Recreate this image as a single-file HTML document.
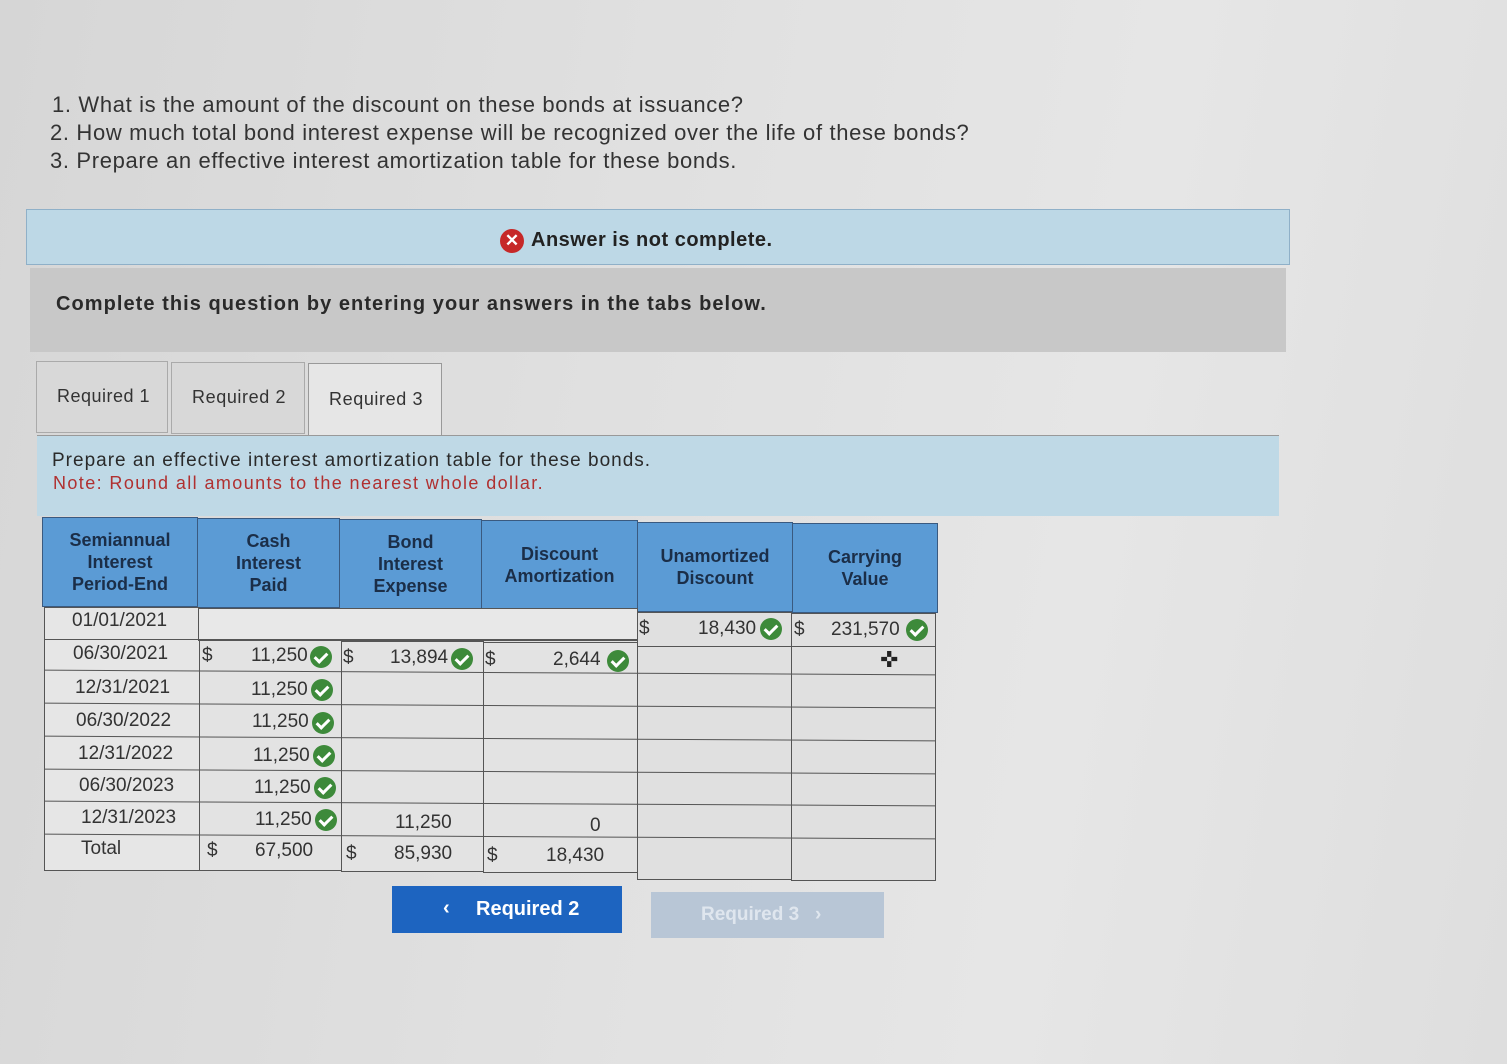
<!DOCTYPE html><html><head><style>
body{margin:0;width:1507px;height:1064px;overflow:hidden;background:linear-gradient(100deg,#d6d6d6 0%,#e0e0e0 40%,#e6e6e6 70%,#dedede 100%);font-family:"Liberation Sans",sans-serif;position:relative}
.a{position:absolute}
.q{font-size:22px;color:#333;letter-spacing:0.65px}
.c{position:absolute;box-sizing:border-box;border:1px solid #555;background:#e3e3e3;font-size:19px;color:#333}
.h{background:#5b9bd5;color:#1b2e48;font-weight:bold;font-size:18px;text-align:center;display:flex;align-items:center;justify-content:center;line-height:22px;border-color:#3a5a80}
.ck{position:absolute;width:22px;height:22px;border-radius:50%;background:#3d8a3a}
.ck:after{content:"";position:absolute;left:7px;top:4px;width:5px;height:10px;border:solid #fff;border-width:0 3px 3px 0;transform:rotate(45deg)}
.t{position:absolute;font-size:19px;color:#333}
</style></head><body>
<div class="a q" style="left:52px;top:92px">1. What is the amount of the discount on these bonds at issuance?</div>
<div class="a q" style="left:50px;top:120px">2. How much total bond interest expense will be recognized over the life of these bonds?</div>
<div class="a q" style="left:50px;top:148px">3. Prepare an effective interest amortization table for these bonds.</div>
<div class="a" style="left:26px;top:209px;width:1264px;height:56px;background:#bdd8e6;border:1px solid #8fb0c8;box-sizing:border-box"></div>
<div class="a" style="left:500px;top:229px;width:24px;height:24px;border-radius:50%;background:#c62828;color:#fff;font-size:17px;text-align:center;line-height:23px;font-weight:bold">✕</div>
<div class="a" style="left:531px;top:229px;font-size:20px;font-weight:bold;color:#222;letter-spacing:0.5px">Answer is not complete.</div>
<div class="a" style="left:30px;top:268px;width:1256px;height:84px;background:#c8c8c8"></div>
<div class="a" style="left:56px;top:293px;font-size:20px;font-weight:bold;color:#2a2a2a;letter-spacing:1.05px">Complete this question by entering your answers in the tabs below.</div>
<div class="a" style="left:36px;top:361px;width:132px;height:72px;background:#d8d8d8;border:1px solid #aaa;box-sizing:border-box"></div>
<div class="a" style="left:171px;top:362px;width:134px;height:72px;background:#d8d8d8;border:1px solid #aaa;box-sizing:border-box"></div>
<div class="a" style="left:308px;top:363px;width:134px;height:74px;background:#e6e6e6;border:1px solid #999;border-bottom:none;box-sizing:border-box"></div>
<div class="a" style="left:57px;top:386px;font-size:18px;color:#333;letter-spacing:0.5px">Required 1</div>
<div class="a" style="left:192px;top:387px;font-size:18px;color:#333;letter-spacing:0.6px">Required 2</div>
<div class="a" style="left:329px;top:389px;font-size:18px;color:#333;letter-spacing:0.6px">Required 3</div>
<div class="a" style="left:37px;top:435px;width:1242px;height:80px;background:#bfd9e6;border-top:1px solid #999"></div>
<div class="a" style="left:52px;top:450px;font-size:19px;color:#2a2a2a;letter-spacing:1px">Prepare an effective interest amortization table for these bonds.</div>
<div class="a" style="left:53px;top:473px;font-size:18px;color:#b03030;letter-spacing:1.4px">Note: Round all amounts to the nearest whole dollar.</div>

<div class="c h" style="left:42px;top:517px;width:156px;height:90px">Semiannual<br>Interest<br>Period-End</div>
<div class="c h" style="left:197px;top:518px;width:143px;height:90px">Cash<br>Interest<br>Paid</div>
<div class="c h" style="left:339px;top:519px;width:143px;height:90px">Bond<br>Interest<br>Expense</div>
<div class="c h" style="left:481px;top:520px;width:157px;height:90px">Discount<br>Amortization</div>
<div class="c h" style="left:637px;top:522px;width:156px;height:90px">Unamortized<br>Discount</div>
<div class="c h" style="left:792px;top:523px;width:146px;height:90px">Carrying<br>Value</div>

<div class="c" style="left:44px;top:607px;width:156px;height:264px;background:#e6e6e6"></div>
<div class="c" style="left:198px;top:608px;width:440px;height:33px;background:#e8e8e8"></div>
<div class="c" style="left:199px;top:640px;width:143px;height:231px"></div>
<div class="c" style="left:341px;top:641px;width:143px;height:231px"></div>
<div class="c" style="left:483px;top:642px;width:155px;height:231px"></div>
<div class="c" style="left:637px;top:612px;width:155px;height:268px;background:#e0e0e0"></div>
<div class="c" style="left:791px;top:613px;width:145px;height:268px;background:#e0e0e0"></div>
<div class="a" style="left:44px;top:639px;width:594px;border-top:1px solid #555"></div>
<div class="a" style="left:44px;top:672px;width:892px;border-top:1px solid #555;transform:rotate(0.3deg)"></div>
<div class="a" style="left:44px;top:705px;width:892px;border-top:1px solid #555;transform:rotate(0.3deg)"></div>
<div class="a" style="left:44px;top:738px;width:892px;border-top:1px solid #555;transform:rotate(0.3deg)"></div>
<div class="a" style="left:44px;top:771px;width:892px;border-top:1px solid #555;transform:rotate(0.3deg)"></div>
<div class="a" style="left:44px;top:803px;width:892px;border-top:1px solid #555;transform:rotate(0.3deg)"></div>
<div class="a" style="left:44px;top:836px;width:892px;border-top:1px solid #555;transform:rotate(0.3deg)"></div>
<div class="a" style="left:637px;top:646px;width:299px;border-top:1px solid #555"></div>
<div class="a" style="left:791px;top:613px;height:232px;border-left:1px solid #555"></div>

<div class="t" style="left:72px;top:610px">01/01/2021</div>
<div class="t" style="left:73px;top:643px">06/30/2021</div>
<div class="t" style="left:75px;top:677px">12/31/2021</div>
<div class="t" style="left:76px;top:710px">06/30/2022</div>
<div class="t" style="left:78px;top:743px">12/31/2022</div>
<div class="t" style="left:79px;top:775px">06/30/2023</div>
<div class="t" style="left:81px;top:807px">12/31/2023</div>
<div class="t" style="left:81px;top:838px">Total</div>

<div class="t" style="left:202px;top:645px">$</div><div class="t" style="left:251px;top:645px">11,250</div><div class="ck" style="left:310px;top:646px"></div>
<div class="t" style="left:251px;top:679px">11,250</div><div class="ck" style="left:311px;top:679px"></div>
<div class="t" style="left:252px;top:711px">11,250</div><div class="ck" style="left:312px;top:712px"></div>
<div class="t" style="left:253px;top:745px">11,250</div><div class="ck" style="left:313px;top:745px"></div>
<div class="t" style="left:254px;top:777px">11,250</div><div class="ck" style="left:314px;top:777px"></div>
<div class="t" style="left:255px;top:809px">11,250</div><div class="ck" style="left:315px;top:809px"></div>
<div class="t" style="left:207px;top:840px">$</div><div class="t" style="left:255px;top:840px">67,500</div>

<div class="t" style="left:343px;top:647px">$</div><div class="t" style="left:390px;top:647px">13,894</div><div class="ck" style="left:451px;top:648px"></div>
<div class="t" style="left:395px;top:812px">11,250</div>
<div class="t" style="left:346px;top:843px">$</div><div class="t" style="left:394px;top:843px">85,930</div>

<div class="t" style="left:485px;top:649px">$</div><div class="t" style="left:553px;top:649px">2,644</div><div class="ck" style="left:607px;top:650px"></div>
<div class="t" style="left:590px;top:815px">0</div>
<div class="t" style="left:487px;top:845px">$</div><div class="t" style="left:546px;top:845px">18,430</div>

<div class="t" style="left:639px;top:618px">$</div><div class="t" style="left:698px;top:618px">18,430</div><div class="ck" style="left:760px;top:618px"></div>
<div class="t" style="left:794px;top:619px">$</div><div class="t" style="left:831px;top:619px">231,570</div><div class="ck" style="left:906px;top:619px"></div>
<div class="a" style="left:880px;top:647px;font-size:22px;color:#222">✜</div>

<div class="a" style="left:392px;top:886px;width:230px;height:47px;background:#1d64c0"></div>
<div class="a" style="left:443px;top:897px;font-size:20px;font-weight:bold;color:#fff">‹</div>
<div class="a" style="left:476px;top:898px;font-size:20px;font-weight:bold;color:#fff">Required 2</div>
<div class="a" style="left:651px;top:892px;width:233px;height:46px;background:#b8c6d6"></div>
<div class="a" style="left:701px;top:904px;font-size:19px;font-weight:bold;color:#dfe6ee">Required 3 &nbsp;&nbsp;›</div>
</body></html>
